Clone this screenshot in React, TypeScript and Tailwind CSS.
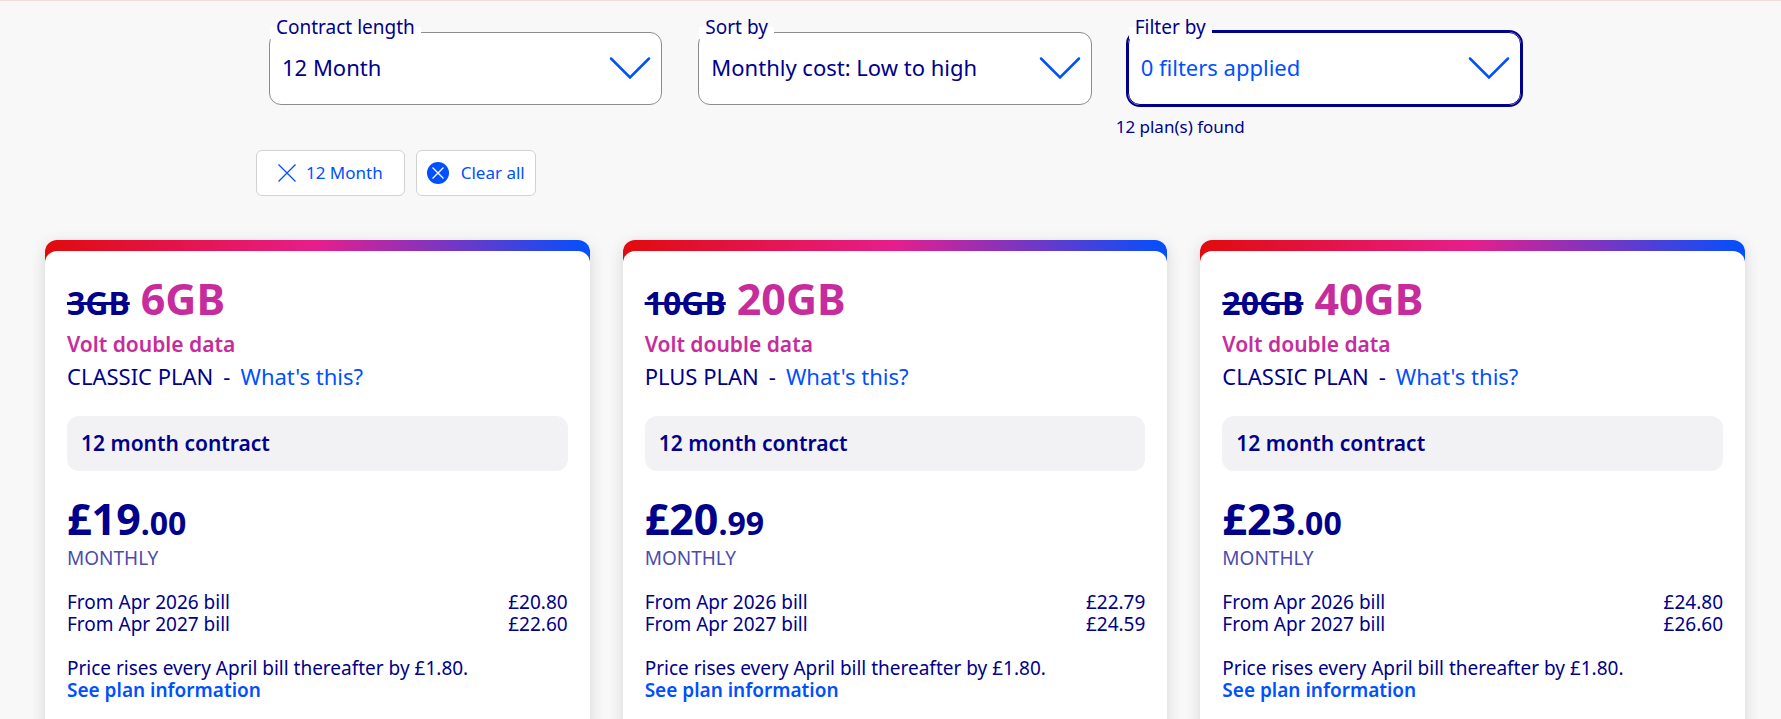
import { useId, useState } from 'react';

interface Plan {
  id: string;
  wasData: string;
  data: string;
  name: string;
  pounds: string;
  pence: string;
  bills: { label: string; price: string }[];
}

const plans: Plan[] = [
  {
    id: 'classic-6',
    wasData: '3GB',
    data: '6GB',
    name: 'CLASSIC PLAN',
    pounds: '£19',
    pence: '.00',
    bills: [
      { label: 'From Apr 2026 bill', price: '£20.80' },
      { label: 'From Apr 2027 bill', price: '£22.60' },
    ],
  },
  {
    id: 'plus-20',
    wasData: '10GB',
    data: '20GB',
    name: 'PLUS PLAN',
    pounds: '£20',
    pence: '.99',
    bills: [
      { label: 'From Apr 2026 bill', price: '£22.79' },
      { label: 'From Apr 2027 bill', price: '£24.59' },
    ],
  },
  {
    id: 'classic-40',
    wasData: '20GB',
    data: '40GB',
    name: 'CLASSIC PLAN',
    pounds: '£23',
    pence: '.00',
    bills: [
      { label: 'From Apr 2026 bill', price: '£24.80' },
      { label: 'From Apr 2027 bill', price: '£26.60' },
    ],
  },
];

// lower half is white so the label cuts through the field's top border
const labelClass =
  'absolute -top-[17px] left-px px-1.5 text-[19px] leading-6 bg-linear-to-b from-transparent from-50% to-white to-50%';

function Chevron() {
  return (
    <svg
      viewBox="0 0 42 24"
      className="pointer-events-none absolute right-[11px] top-6 h-6 w-[42px]"
      fill="none"
      stroke="#0050ff"
      strokeWidth="2.5"
      strokeLinecap="round"
      aria-hidden="true"
    >
      <path d="M2 2.5 21 21.5 40 2.5" />
    </svg>
  );
}

interface SelectFieldProps {
  label: string;
  options: string[];
}

function SelectField({ label, options }: SelectFieldProps) {
  const id = useId();
  const [value, setValue] = useState(options[0]);

  return (
    <div className="relative">
      <select
        id={id}
        value={value}
        onChange={(e) => setValue(e.target.value)}
        className="h-[73px] w-full appearance-none rounded-xl border border-[#8c8c8c] bg-white pb-0.5 pl-3 pr-14 text-[22px]"
      >
        {options.map((option) => (
          <option key={option}>{option}</option>
        ))}
      </select>
      <label htmlFor={id} className={labelClass}>
        {label}
      </label>
      <Chevron />
    </div>
  );
}

function PlanCard({ plan }: { plan: Plan }) {
  return (
    <article className="rounded-xl bg-[linear-gradient(72deg,#e10a0a_0%,#e61e8c_50%,#0050ff_100%)] bg-[length:100%_24px] bg-no-repeat pt-[11px] shadow-[0_4px_16px_rgba(0,0,0,0.14)]">
      <div className="rounded-xl bg-white px-[22px] pb-16 pt-6">
        <h2 className="flex items-baseline gap-[11px] font-bold">
          <del className="text-[32px] leading-8 decoration-3">{plan.wasData}</del>
          <span className="text-[43px] leading-12 text-[#c72c9c]">{plan.data}</span>
        </h2>
        <p className="mt-1.5 text-[21px] font-semibold leading-[30px] text-[#c72c9c]">Volt double data</p>
        <p className="mt-px flex gap-2.5 text-[22px] leading-8">
          <span>{plan.name}</span>
          <span>-</span>
          <a href="#whats-this" className="text-[#0050ff]">
            What's this?
          </a>
        </p>
        <p className="mt-6 rounded-xl bg-[#f2f2f5] px-3.5 py-3 text-[21px] font-semibold leading-[31px]">
          12 month contract
        </p>
        <p className="mt-6 flex items-baseline font-bold">
          <span className="text-[43px] leading-12">{plan.pounds}</span>
          <span className="text-[32px] leading-8">{plan.pence}</span>
        </p>
        <p className="mt-1 text-[19px] leading-[22px] text-[#4b4bae]">MONTHLY</p>
        <table className="mt-[22px] w-full text-[19px] leading-[22px]">
          <tbody>
            {plan.bills.map((bill) => (
              <tr key={bill.label}>
                <th scope="row" className="text-left font-normal">
                  {bill.label}
                </th>
                <td className="text-right">{bill.price}</td>
              </tr>
            ))}
          </tbody>
        </table>
        <p className="mt-[22px] text-[19px] leading-[22px]">Price rises every April bill thereafter by £1.80.</p>
        <a href="#plan-information" className="block text-[19px] font-semibold leading-[22px] text-[#0050ff]">
          See plan information
        </a>
      </div>
    </article>
  );
}

export default function App() {
  return (
    <main className="min-h-screen border-t border-[#f8dadc] bg-[#f8f8f8] pb-8 pl-[9px] font-['Noto_Sans',sans-serif] text-[#00008c]">
      <section className="mx-auto max-w-[1278px] pt-[31px]">
        <div className="grid grid-cols-3 gap-9 px-[13px]">
          <SelectField label="Contract length" options={['12 Month', '24 Month', '30 day']} />
          <SelectField label="Sort by" options={['Monthly cost: Low to high', 'Monthly cost: High to low']} />
          <div>
            <div className="relative">
              <button
                type="button"
                aria-labelledby="filter-label filter-value"
                className="h-[73px] w-full rounded-xl border border-[#00008c] bg-white pb-0.5 pl-3 text-left text-[22px] text-[#0050ff] outline-2 outline-[#00008c]"
              >
                <span id="filter-value">0 filters applied</span>
              </button>
              <span id="filter-label" className={labelClass}>
                Filter by
              </span>
              <Chevron />
            </div>
            <p className="-ml-3 mt-2.5 text-[17px] leading-6">12 plan(s) found</p>
          </div>
        </div>
        <div className="mt-[11px] flex gap-[11px] text-[17px] text-[#0050ff]">
          <button type="button" className="flex h-[46px] items-center gap-2.5 rounded-md border border-[#d2d2d2] bg-white px-[21px]">
            <svg viewBox="0 0 18 18" className="h-[18px] w-[18px]" stroke="currentColor" strokeWidth="1.3" aria-hidden="true">
              <path d="M.5.5l17 17M17.5.5l-17 17" />
            </svg>
            12 Month
          </button>
          <button type="button" className="flex h-[46px] items-center gap-3 rounded-md border border-[#d2d2d2] bg-white px-2.5">
            <svg viewBox="0 0 22 22" className="h-[22px] w-[22px]" aria-hidden="true">
              <circle cx="11" cy="11" r="11" fill="#0050ff" />
              <path d="M5.5 5.5l11 11M16.5 5.5l-11 11" stroke="#fff" strokeWidth="1.3" />
            </svg>
            Clear all
          </button>
        </div>
      </section>

      <section className="mx-auto mt-11 grid max-w-[1700px] grid-cols-3 gap-[33px]">
        {plans.map((plan) => (
          <PlanCard key={plan.id} plan={plan} />
        ))}
      </section>
    </main>
  );
}
